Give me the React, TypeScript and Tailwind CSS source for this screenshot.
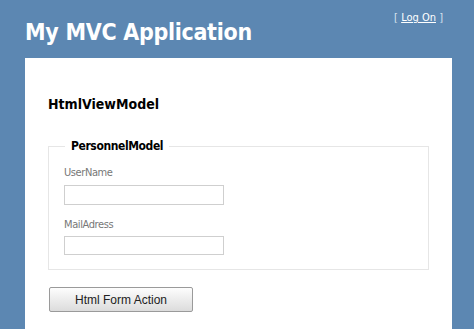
export default function App() {
  return (
    <div className="flex h-[332px] w-[474px] flex-col overflow-hidden bg-white font-['DejaVu_Sans',sans-serif] [font-stretch:condensed]">
      <div className="flex h-[329px] flex-col bg-[#5c87b2] pl-[25px] pr-[22px]">
        <div className="flex h-[58px] items-start justify-between">
          <h1 className="pt-[17px] text-[23px] font-bold leading-[30px] tracking-[-0.3px] text-white">My MVC Application</h1>
          <div className="mr-[9px] pt-[11px] text-[11px] leading-[14px] text-[#d6e2ee]">
            [ <a className="text-white underline">Log On</a> ]
          </div>
        </div>
        <div className="flex-1 bg-white px-[23px] pt-[37px]">
          <h2 className="text-[14px] font-bold leading-[18px] text-black">HtmlViewModel</h2>
          <fieldset className="mt-[25px] h-[132px] border border-[#e6e6e6] pl-[15px]">
            <legend className="ml-[1px] px-[6px] text-[12px] font-bold leading-[16px] tracking-[-0.4px] text-black">PersonnelModel</legend>
            <div className="mt-[12px] text-[11px] leading-[14px] tracking-[-0.4px] text-[#777]">UserName</div>
            <div className="mt-[5px] h-[20px] w-[160px] border border-[#cfcfcf] bg-white" />
            <div className="mt-[13px] text-[11px] leading-[14px] tracking-[-0.4px] text-[#777]">MailAdress</div>
            <div className="mt-[4px] h-[19px] w-[160px] border border-[#cfcfcf] bg-white" />
          </fieldset>
          <button className="ml-[1px] mt-[17px] h-[25px] w-[144px] rounded-[2px] border border-[#9a9a9a] bg-gradient-to-b from-[#fdfdfd] to-[#dcdcdc] font-['Liberation_Sans',sans-serif] text-[12px] text-[#222] [font-stretch:normal]">
            Html Form Action
          </button>
        </div>
      </div>
    </div>
  );
}
